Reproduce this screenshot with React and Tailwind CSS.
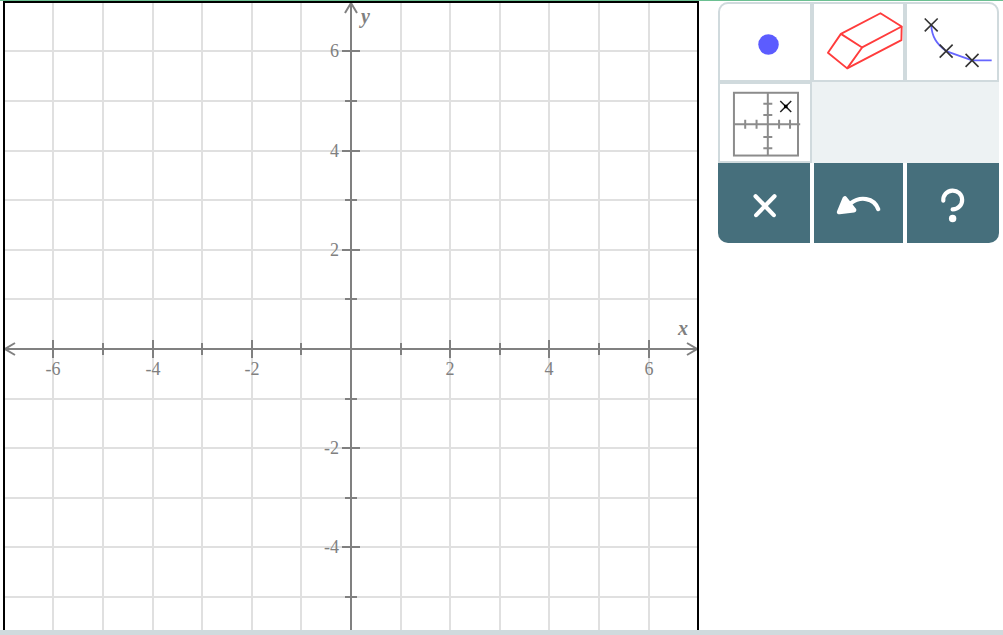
import React, { useState } from 'react';

const SIZE = 692;
const CENTER = SIZE / 2;
const UNIT = 49.6;

// every integer line on the plane, without the origin
const steps = [-6, -5, -4, -3, -2, -1, 1, 2, 3, 4, 5, 6];
const xLabels = [-6, -4, -2, 2, 4, 6];
const yLabels = [-4, -2, 2, 4, 6];

const toX = (n) => Math.round(CENTER + n * UNIT);
const toY = (n) => Math.round(CENTER - n * UNIT);

const CoordinatePlane = () => {
  return (
    <svg
      viewBox={`0 0 ${SIZE} ${SIZE}`}
      className="block w-full font-['Liberation_Serif',serif]"
      role="img"
      aria-label="Coordinate plane"
    >
      {/* Grid */}
      <g stroke="#e0e0e0" strokeWidth="2">
        {steps.map((n) => (
          <g key={n}>
            <line x1={toX(n)} y1="0" x2={toX(n)} y2={SIZE} />
            <line x1="0" y1={toY(n)} x2={SIZE} y2={toY(n)} />
          </g>
        ))}
      </g>

      {/* Axes and arrow heads */}
      <g stroke="#808080" strokeWidth="2" fill="none">
        <line x1="0" y1={CENTER} x2={SIZE} y2={CENTER} />
        <line x1={CENTER} y1="0" x2={CENTER} y2={SIZE} />
        <path d="M10 340 L0 346 L10 352" />
        <path d="M682 340 L692 346 L682 352" />
        <path d="M340 10 L346 0 L352 10" />
        <path d="M340 682 L346 692 L352 682" />
        {steps.map((n) => {
          const half = n % 2 === 0 ? 9 : 6;
          return (
            <g key={n}>
              <line x1={toX(n)} y1={CENTER - half} x2={toX(n)} y2={CENTER + half} />
              <line x1={CENTER - half} y1={toY(n)} x2={CENTER + half} y2={toY(n)} />
            </g>
          );
        })}
      </g>

      {/* Labels */}
      <g fill="#808080" fontSize="18">
        {xLabels.map((n) => (
          <text key={n} x={toX(n)} y="372" textAnchor="middle">{n}</text>
        ))}
        {yLabels.map((n) => (
          <text key={n} x="334" y={toY(n) + 6} textAnchor="end">{n}</text>
        ))}
        <text x="673" y="332" fontSize="20" fontStyle="italic" fontWeight="bold">x</text>
        <text x="356" y="20" fontSize="20" fontStyle="italic" fontWeight="bold">y</text>
      </g>
    </svg>
  );
};

const PointIcon = () => (
  <svg viewBox="0 0 90 76" className="h-full w-full">
    <circle cx="48.7" cy="40.3" r="10.3" fill="#5c5cff" />
  </svg>
);

const EraserIcon = () => (
  <svg viewBox="0 0 90 76" className="h-full w-full" fill="none" stroke="#ff3c3c" strokeWidth="1.9" strokeLinejoin="round">
    <path d="M14 48.7 L27 29.7 L48.3 43.3 L33.3 64.3 Z" />
    <path d="M27 29.7 L66.7 9 L88 22.3 L48.3 43.3" />
    <path d="M88 22.3 L87.7 36 L33.3 64.3" />
  </svg>
);

const CurveIcon = () => (
  <svg viewBox="0 0 90 76" className="h-full w-full" fill="none">
    <path d="M24.3 20.7 C25 33 30 40 39.3 47 L65.3 56.3 H85" stroke="#6666ff" strokeWidth="1.8" />
    <g stroke="#333333" strokeWidth="1.6">
      <path d="M17.8 14.2 L30.8 27.2 M30.8 14.2 L17.8 27.2" />
      <path d="M32.8 40.5 L45.8 53.5 M45.8 40.5 L32.8 53.5" />
      <path d="M58.8 49.8 L71.8 62.8 M71.8 49.8 L58.8 62.8" />
    </g>
  </svg>
);

const PlotIcon = () => (
  <svg viewBox="0 0 90 76" className="h-full w-full" fill="none" stroke="#8c8c8c" strokeWidth="2">
    <rect x="14" y="8.5" width="64.3" height="63" />
    <path d="M48 8.5 V71.5 M14 40 H80.5" />
    <path d="M25.3 35.5 V44.5 M36.7 35.5 V44.5 M59.3 35.5 V44.5 M70.3 35.5 V44.5" />
    <path d="M43.5 19.5 H52.5 M43.5 30.7 H52.5 M43.5 53 H52.5 M43.5 64.3 H52.5" />
    <path d="M60.5 16.7 L71.5 27.7 M71.5 16.7 L60.5 27.7" stroke="#222222" strokeWidth="1.5" />
    <rect x="64.3" y="20.5" width="3.5" height="3.5" fill="#000000" stroke="none" />
  </svg>
);

const ClearIcon = () => (
  <svg viewBox="0 0 92 80" className="h-full w-full" fill="none" stroke="#ffffff" strokeWidth="4.2" strokeLinecap="round">
    <path d="M37.7 33 L56 52 M56.7 33 L38.3 52" />
  </svg>
);

const UndoIcon = () => (
  <svg viewBox="0 0 90 80" className="h-full w-full" fill="none" stroke="#ffffff" strokeLinecap="round" strokeLinejoin="round">
    <path d="M37 40 C46 33 60 34 64.5 46" strokeWidth="4.2" />
    <path d="M31 35.5 L25.5 48.7 L40 46.8 Z" fill="#ffffff" strokeWidth="5" />
  </svg>
);

const HelpIcon = () => (
  <svg viewBox="0 0 91 80" className="h-full w-full" fill="none">
    <path d="M36 37.5 A9.4 9.4 0 1 1 45.3 46.2" stroke="#ffffff" strokeWidth="4.2" strokeLinecap="round" />
    <circle cx="45.3" cy="55.3" r="3.7" fill="#ffffff" />
  </svg>
);

const tools = [
  { id: 'point', label: 'Point', Icon: PointIcon, corner: 'rounded-tl-[10px]' },
  { id: 'eraser', label: 'Eraser', Icon: EraserIcon, corner: '' },
  { id: 'curve', label: 'Curve', Icon: CurveIcon, corner: 'rounded-tr-[10px]' },
  { id: 'plot', label: 'Plot by coordinates', Icon: PlotIcon, corner: '' },
];

const actions = [
  { id: 'clear', label: 'Clear', Icon: ClearIcon, edge: 'border-r-2 rounded-bl-[10px]' },
  { id: 'undo', label: 'Undo', Icon: UndoIcon, edge: 'border-x-2' },
  { id: 'help', label: 'Help', Icon: HelpIcon, edge: 'border-l-2 rounded-br-[10px]' },
];

const App = () => {
  const [tool, setTool] = useState('point');

  return (
    <div className="flex h-screen flex-col overflow-hidden border-t border-[#6cc092] bg-white">
      <main className="flex min-h-0 flex-1 items-start gap-[19px] overflow-hidden pr-1 pl-[3px]">
        <div className="min-w-0 flex-1 border-2 border-black">
          <CoordinatePlane />
        </div>

        <div className="mt-px grid h-[241px] w-[281px] shrink-0 grid-cols-3 grid-rows-3 rounded-[10px] bg-[#edf2f3]">
          {tools.map(({ id, label, Icon, corner }) => (
            <button
              key={id}
              type="button"
              aria-label={label}
              aria-pressed={tool === id}
              onClick={() => setTool(id)}
              className={`min-h-0 border-2 border-[#d0dadd] bg-white ${corner}`}
            >
              <Icon />
            </button>
          ))}
          <div className="col-span-3 col-start-1 row-start-3 grid grid-cols-3 rounded-b-[10px] bg-white">
            {actions.map(({ id, label, Icon, edge }) => (
              <button
                key={id}
                type="button"
                aria-label={label}
                className={`min-h-0 border-white bg-[#466f7c] ${edge}`}
              >
                <Icon />
              </button>
            ))}
          </div>
        </div>
      </main>
      <footer className="h-[5px] shrink-0 bg-[#d0dadd]" />
    </div>
  );
};

export default App;
